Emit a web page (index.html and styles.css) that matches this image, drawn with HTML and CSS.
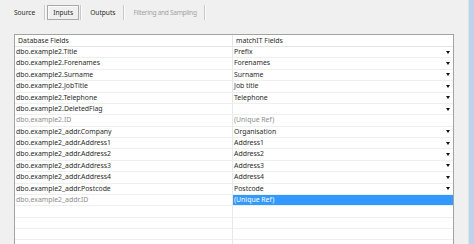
FILE: index.html
```html
<!DOCTYPE html>
<html>
<head>
<meta charset="utf-8">
<link rel="stylesheet" href="styles.css">
</head>
<body>
<div class="window">
  <div class="main">
    <div class="tabs">
      <span class="tab first">Source</span>
      <span class="sep"></span>
      <span class="tab active">Inputs</span>
      <span class="sep"></span>
      <span class="tab">Outputs</span>
      <span class="sep"></span>
      <span class="tab disabled">Filtering and Sampling</span>
      <span class="sep"></span>
    </div>
    <div class="grid">
      <div class="hcell left">Database Fields</div>
      <div class="hcell right">matchIT Fields</div>

      <div class="cell left">dbo.example2.Title</div>
      <div class="cell right"><span>Prefix</span><span class="arrow"></span></div>
      <div class="cell left">dbo.example2.Forenames</div>
      <div class="cell right"><span>Forenames</span><span class="arrow"></span></div>
      <div class="cell left">dbo.example2.Surname</div>
      <div class="cell right"><span>Surname</span><span class="arrow"></span></div>
      <div class="cell left">dbo.example2.JobTitle</div>
      <div class="cell right"><span>Job title</span><span class="arrow"></span></div>
      <div class="cell left">dbo.example2.Telephone</div>
      <div class="cell right"><span>Telephone</span><span class="arrow"></span></div>
      <div class="cell left">dbo.example2.DeletedFlag</div>
      <div class="cell right"><span></span><span class="arrow"></span></div>
      <div class="cell left muted">dbo.example2.ID</div>
      <div class="cell right muted"><span>(Unique Ref)</span></div>
      <div class="cell left">dbo.example2_addr.Company</div>
      <div class="cell right"><span>Organisation</span><span class="arrow"></span></div>
      <div class="cell left">dbo.example2_addr.Address1</div>
      <div class="cell right"><span>Address1</span><span class="arrow"></span></div>
      <div class="cell left">dbo.example2_addr.Address2</div>
      <div class="cell right"><span>Address2</span><span class="arrow"></span></div>
      <div class="cell left">dbo.example2_addr.Address3</div>
      <div class="cell right"><span>Address3</span><span class="arrow"></span></div>
      <div class="cell left">dbo.example2_addr.Address4</div>
      <div class="cell right"><span>Address4</span><span class="arrow"></span></div>
      <div class="cell left">dbo.example2_addr.Postcode</div>
      <div class="cell right"><span>Postcode</span><span class="arrow"></span></div>
      <div class="cell left muted">dbo.example2_addr.ID</div>
      <div class="cell right selected"><span>(Unique Ref)</span></div>

      <div class="cell left"></div><div class="cell right"></div>
      <div class="cell left"></div><div class="cell right"></div>
      <div class="cell left"></div><div class="cell right"></div>
      <div class="cell left"></div><div class="cell right"></div>
    </div>
  </div>
  <div class="edge"></div>
</div>
</body>
</html>
```
FILE: styles.css
```css
html, body {
  margin: 0;
  padding: 0;
}
body {
  width: 474px;
  height: 244px;
  overflow: hidden;
  background: #f0f0f0;
  font-family: "Noto Sans", "Open Sans", sans-serif;
  font-size: 6.9px;
  color: #2a2a2a;
}
.window {
  display: flex;
  height: 244px;
}
.main {
  flex: 1;
  padding-left: 14px;
  padding-right: 14px;
  overflow: hidden;
}
.tabs {
  height: 34px;
  display: flex;
  align-items: flex-start;
  padding-top: 5px;
  box-sizing: border-box;
  margin-left: -7px;
  font-size: 6.6px;
}
.tab {
  height: 15px;
  line-height: 15px;
  padding: 0 7px;
  box-sizing: border-box;
  white-space: nowrap;
}
.tab.first {
  padding-right: 8px;
}
.tab.active {
  border: 1px solid #a9a9a9;
  box-shadow: inset 1px 1px 0 #fbfbfb;
  line-height: 13px;
  padding: 0 5px;
}
.tab.disabled {
  color: #a3a3a3;
  padding: 0 6px 0 7px;
  letter-spacing: -0.3px;
}
.sep {
  width: 1px;
  height: 15px;
  background: #c9c9c9;
  border-right: 1px solid #fbfbfb;
  margin: 0 1px;
}
.grid {
  display: grid;
  grid-template-columns: 218px 1fr;
  grid-template-rows: 12px;
  grid-auto-rows: 11.38px;
  background: #ffffff;
  border: 1px solid #a3a3a3;
  border-bottom: none;
  height: 230px;
  box-sizing: border-box;
}
.hcell {
  line-height: 12px;
  padding-left: 3px;
  border-bottom: 1px solid #e5e5e5;
  box-sizing: border-box;
  white-space: nowrap;
}
.hcell.left {
  border-right: 1px solid #e5e5e5;
}
.cell {
  line-height: 10.38px;
  padding-left: 1px;
  border-bottom: 1px solid #efefef;
  white-space: nowrap;
  overflow: hidden;
}
.cell.left {
  border-right: 1px solid #e8e8e8;
}
.cell.right {
  display: flex;
  justify-content: space-between;
  align-items: center;
  padding-right: 3px;
}
.muted {
  color: #8d8d8d;
}
.cell.selected {
  background: #3399ff;
  color: #ffffff;
}
.arrow {
  width: 0;
  height: 0;
  border-left: 2.5px solid transparent;
  border-right: 2.5px solid transparent;
  border-top: 3px solid #111;
}
.edge {
  width: 6px;
  background: #bdd3ea;
  border-left: 1px solid #dde3ea;
  box-sizing: border-box;
}
```
